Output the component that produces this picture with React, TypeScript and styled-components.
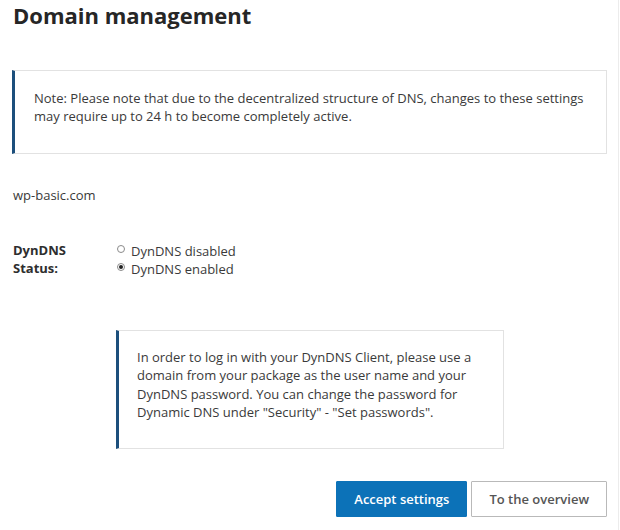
import React, { useState } from "react";
import styled, { createGlobalStyle } from "styled-components";

const GlobalStyle = createGlobalStyle`
  html, body {
    margin: 0;
    padding: 0;
    background: #ffffff;
  }
  body {
    font-family: "Open Sans", "Liberation Sans", Arial, sans-serif;
    color: #3a3a3a;
    font-size: 13px;
  }
`;

type DynState = "disabled" | "enabled";

const App = () => {
  const [dyn, setDyn] = useState<DynState>("enabled");

  return (
    <>
      <GlobalStyle />
      <Page>
        <Title>Domain management</Title>

        <NoteBox>
          Note: Please note that due to the decentralized structure of DNS,
          changes to these settings may require up to 24 h to become
          completely active.
        </NoteBox>

        <DomainName>wp-basic.com</DomainName>

        <FormRow>
          <FieldLabel>
            DynDNS
            <br />
            Status:
          </FieldLabel>
          <RadioGroup>
            <RadioOption onClick={() => setDyn("disabled")}>
              <RadioDot $checked={dyn === "disabled"} />
              DynDNS disabled
            </RadioOption>
            <RadioOption onClick={() => setDyn("enabled")}>
              <RadioDot $checked={dyn === "enabled"} />
              DynDNS enabled
            </RadioOption>
          </RadioGroup>
        </FormRow>

        <InfoBox>
          In order to log in with your DynDNS Client, please use a domain from
          your package as the user name and your DynDNS password. You can
          change the password for Dynamic DNS under "Security" - "Set
          passwords".
        </InfoBox>

        <Actions>
          <Button $primary>Accept settings</Button>
          <Button>To the overview</Button>
        </Actions>
      </Page>
    </>
  );
};

export default App;

const Page = styled.div`
  width: 596px;
  min-height: 530px;
  padding: 0 10px 0 12px;
  border-right: 1px solid #ececec;
  box-sizing: content-box;
`;

const Title = styled.h1`
  margin: 0;
  font-size: 22px;
  line-height: 30px;
  font-weight: 700;
  color: #262626;
  padding-left: 1px;
`;

const NoteBox = styled.div`
  margin-top: 40px;
  width: 595px;
  box-sizing: border-box;
  padding: 18px 20px 28px 19px;
  border: 1px solid #e2e2e2;
  border-left: 3px solid #1c4f7c;
  line-height: 18px;
  background: #ffffff;
`;

const DomainName = styled.div`
  margin-top: 32px;
  line-height: 18px;
  padding-left: 1px;
`;

const FormRow = styled.div`
  margin-top: 37px;
  display: flex;
  line-height: 18px;
`;

const FieldLabel = styled.div`
  width: 104px;
  padding-left: 1px;
  font-weight: 700;
  color: #2e2e2e;
`;

const RadioGroup = styled.div`
  display: flex;
  flex-direction: column;
  padding-top: 1px;
`;

const RadioOption = styled.label`
  display: flex;
  align-items: center;
  gap: 6px;
  cursor: pointer;
`;

const RadioDot = styled.span<{ $checked?: boolean }>`
  position: relative;
  width: 6px;
  height: 6px;
  border: 1px solid #8a8a8a;
  border-radius: 50%;
  margin-top: -4px;
  background: #ffffff;

  &::after {
    content: "";
    display: ${({ $checked }) => ($checked ? "block" : "none")};
    position: absolute;
    left: 1px;
    top: 1px;
    width: 4px;
    height: 4px;
    border-radius: 50%;
    background: #222222;
  }
`;

const InfoBox = styled.div`
  margin: 52px 0 0 104px;
  width: 388px;
  box-sizing: border-box;
  padding: 17px 24px 27px 18px;
  border: 1px solid #e2e2e2;
  border-left: 3px solid #1c4f7c;
  line-height: 18.3px;
`;

const Actions = styled.div`
  margin-top: 32px;
  width: 595px;
  display: flex;
  justify-content: flex-end;
  gap: 4px;
`;

const Button = styled.button<{ $primary?: boolean }>`
  height: 36px;
  padding: 0 ${({ $primary }) => ($primary ? "17px" : "17px")};
  font-family: "Open Sans", "Liberation Sans", Arial, sans-serif;
  font-size: 13px;
  font-weight: 600;
  border-radius: 1px;
  cursor: pointer;
  border: 1px solid ${({ $primary }) => ($primary ? "#0c72b8" : "#b9b9b9")};
  background: ${({ $primary }) => ($primary ? "#0c72b8" : "#ffffff")};
  color: ${({ $primary }) => ($primary ? "#ffffff" : "#555555")};
`;
